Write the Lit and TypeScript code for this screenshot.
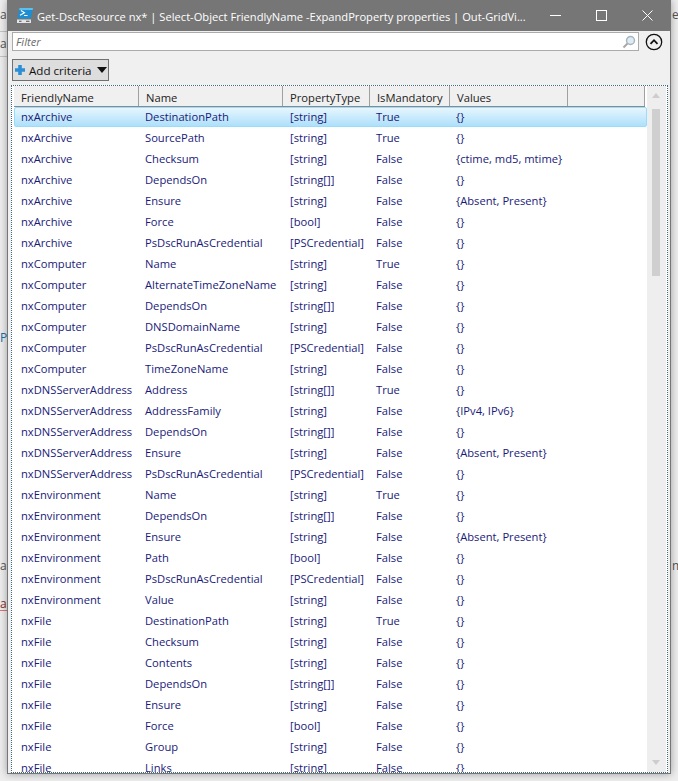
import {LitElement, html, css, svg} from 'lit';
import {customElement} from 'lit/decorators.js';

type Row = [string, string, string, string, string];

const S = '[string]';
const SA = '[string[]]';
const B = '[bool]';
const C = '[PSCredential]';
const E = '{}';
const AP = '{Absent, Present}';

const rows: Row[] = [
  ['nxArchive', 'DestinationPath', S, 'True', E],
  ['nxArchive', 'SourcePath', S, 'True', E],
  ['nxArchive', 'Checksum', S, 'False', '{ctime, md5, mtime}'],
  ['nxArchive', 'DependsOn', SA, 'False', E],
  ['nxArchive', 'Ensure', S, 'False', AP],
  ['nxArchive', 'Force', B, 'False', E],
  ['nxArchive', 'PsDscRunAsCredential', C, 'False', E],
  ['nxComputer', 'Name', S, 'True', E],
  ['nxComputer', 'AlternateTimeZoneName', S, 'False', E],
  ['nxComputer', 'DependsOn', SA, 'False', E],
  ['nxComputer', 'DNSDomainName', S, 'False', E],
  ['nxComputer', 'PsDscRunAsCredential', C, 'False', E],
  ['nxComputer', 'TimeZoneName', S, 'False', E],
  ['nxDNSServerAddress', 'Address', SA, 'True', E],
  ['nxDNSServerAddress', 'AddressFamily', S, 'False', '{IPv4, IPv6}'],
  ['nxDNSServerAddress', 'DependsOn', SA, 'False', E],
  ['nxDNSServerAddress', 'Ensure', S, 'False', AP],
  ['nxDNSServerAddress', 'PsDscRunAsCredential', C, 'False', E],
  ['nxEnvironment', 'Name', S, 'True', E],
  ['nxEnvironment', 'DependsOn', SA, 'False', E],
  ['nxEnvironment', 'Ensure', S, 'False', AP],
  ['nxEnvironment', 'Path', B, 'False', E],
  ['nxEnvironment', 'PsDscRunAsCredential', C, 'False', E],
  ['nxEnvironment', 'Value', S, 'False', E],
  ['nxFile', 'DestinationPath', S, 'True', E],
  ['nxFile', 'Checksum', S, 'False', E],
  ['nxFile', 'Contents', S, 'False', E],
  ['nxFile', 'DependsOn', SA, 'False', E],
  ['nxFile', 'Ensure', S, 'False', E],
  ['nxFile', 'Force', B, 'False', E],
  ['nxFile', 'Group', S, 'False', E],
  ['nxFile', 'Links', S, 'False', E],
];

const heads = ['FriendlyName', 'Name', 'PropertyType', 'IsMandatory', 'Values', ''];

@customElement('app-root')
export class AppRoot extends LitElement {
  static override styles = css`
    :host {
      display: block;
      position: relative;
      width: 678px;
      height: 781px;
      overflow: hidden;
      background: #eeeeee;
      font-family: "Open Sans", "Noto Sans", sans-serif;
      font-size: 11.2px;
      color: #1a1a78;
    }

    /* bits of the windows behind */
    .behind { position: absolute; font-size: 12px; color: #555; line-height: 14px; }
    .line { position: absolute; left: 0; width: 7px; height: 1px; background: #c4c4c4; }

    .window {
      position: absolute;
      left: 7px;
      top: 0;
      width: 664px;
      height: 774px;
      box-sizing: border-box;
      display: flex;
      flex-direction: column;
      background: #f0f0f0;
      border: 1px solid #767676;
      border-top: 0;
      box-shadow: 0 0 8px rgba(0,0,0,.35);
    }

    .title {
      height: 31px;
      flex: none;
      display: flex;
      align-items: center;
      background: #767676;
      color: #fff;
      font-size: 11.15px;
      padding-left: 9px;
    }
    .title .cap { margin-left: 4px; flex: 1; white-space: nowrap; margin-top: 1px; }
    .title svg { flex: none; display: block; }
    .ctl { width: 46px; height: 31px; display: flex; align-items: center; justify-content: center; }

    .filter-row {
      height: 21px;
      flex: none;
      display: flex;
      align-items: center;
      padding-left: 4px;
      gap: 6px;
    }
    .filter {
      width: 627px;
      height: 19px;
      box-sizing: border-box;
      background: #fff;
      border: 1px solid #ababab;
      display: flex;
      align-items: center;
      justify-content: space-between;
      padding: 0 2px 0 3px;
      font-style: italic;
      color: #6d6d6d;
    }

    .crit-row { flex: none; padding: 7px 0 0 4px; height: 22px; }
    .crit {
      width: 97px;
      height: 22px;
      box-sizing: border-box;
      border: 1px solid #707070;
      background: #dddddd;
      display: flex;
      align-items: center;
      padding-left: 2px;
      gap: 4px;
      color: #111;
      font-size: 11.6px;
    }

    .grid {
      flex: none;
      margin: 4px 0 0 3px;
      width: 657px;
      height: 688px;
      box-sizing: border-box;
      background: #fff;
      border: 1px dotted #3f6b80;
      display: flex;
      overflow: hidden;
    }
    .table { width: 635px; flex: none; overflow: hidden; }
    .head {
      display: grid;
      grid-template-columns: 125px 144px 87px 80px 118px 77px;
      height: 20px;
      margin-left: 2px;
      width: 631px;
      background: #f0f0f0;
      border-bottom: 1px solid #8a8a8a;
      color: #222;
    }
    .head div {
      border-right: 1px solid #a0a0a0;
      padding-left: 7px;
      line-height: 24px;
      white-space: nowrap;
      overflow: hidden;
    }
    .row {
      display: grid;
      grid-template-columns: 124px 145px 86px 80px 118px;
      height: 21px;
      line-height: 21px;
      margin-left: 2px;
      box-sizing: border-box;
      white-space: nowrap;
    }
    .row div { padding-left: 7px; overflow: hidden; }
    .row.sel {
      grid-template-columns: 123px 145px 86px 80px 118px;
      height: 20px;
      line-height: 18px;
      border: 1px solid #99dcfb;
      border-radius: 2px;
      background: linear-gradient(#e6f6fe, #aee0fb);
    }
    .row.sel div:first-child { padding-left: 6px; }

    .scroll {
      flex: none;
      width: 19px;
      box-sizing: border-box;
      padding-right: 1px;
      background: #eeeeee;
      display: flex;
      flex-direction: column;
      align-items: center;
    }
    .thumb { width: 8px; height: 167px; background: #cfcfcf; margin-top: 11px; }
    .up, .down { width: 0; height: 0; border-left: 4.5px solid transparent; border-right: 4.5px solid transparent; }
    .up { border-bottom: 5px solid #cdcdcd; margin-top: 7px; }
    .down { border-top: 5px solid #cdcdcd; margin-top: auto; margin-bottom: 7px; }
  `;

  private _icon() {
    return svg`<svg width="16" height="15" viewBox="0 0 16 15">
      <path d="M2.500 0H16l-2 10.500H.5z" fill="#1d8fd1"/>
      <path d="M2.500 0H16l-.4 2H2.100z" fill="#5cc0ee"/>
      <path d="M4 2.500l3.500 2.300L3 7.300" fill="none" stroke="#fff" stroke-width="1.100"/>
      <path d="M7 7.500h3.500" stroke="#fff" stroke-width="1"/>
      <rect x="0" y="11.500" width="14" height="3.500" fill="#e4e4e4"/>
      <rect x="2" y="12.700" width="2.500" height="1.200" fill="#666"/>
      <rect x="9" y="12.700" width="3.500" height="1.200" fill="#666"/>
    </svg>`;
  }

  override render() {
    return html`
      <span class="behind" style="left:0;top:8px">a</span>
      <span class="behind" style="left:0;top:37px">ac</span>
      <span class="behind" style="left:0;top:331px;color:#1b6fa8">P:</span>
      <span class="behind" style="left:0;top:559px">a</span>
      <span class="behind" style="left:0;top:597px;color:#8a2a2a">a</span>
      <span class="behind" style="left:672px;top:8px">ee</span>
      <span class="behind" style="left:672px;top:559px">m</span>
      <div class="line" style="top:31px"></div>
      <div class="line" style="top:56px"></div>
      <div class="line" style="top:610px;background:#e87070"></div>

      <div class="window">
        <div class="title">
          ${this._icon()}
          <span class="cap">Get-DscResource nx* | Select-Object FriendlyName -ExpandProperty properties | Out-GridVi...</span>
          <div class="ctl"><svg width="11" height="11"><path d="M0 5.500h11" stroke="#fff"/></svg></div>
          <div class="ctl"><svg width="11" height="11"><rect x=".5" y=".5" width="10" height="10" fill="none" stroke="#fff"/></svg></div>
          <div class="ctl"><svg width="11" height="11"><path d="M.5.5l10 10M10.500.5l-10 10" stroke="#fff"/></svg></div>
        </div>

        <div class="filter-row">
          <div class="filter">
            <span>Filter</span>
            <svg width="14" height="14" viewBox="0 0 14 14">
              <circle cx="8.500" cy="5.500" r="4" fill="#dcebf5" stroke="#a9b4bb" stroke-width="1.400"/>
              <path d="M5.500 8.500L1.500 12.500" stroke="#a8a8a8" stroke-width="2"/>
            </svg>
          </div>
          <svg width="18" height="18" viewBox="0 0 18 18">
            <circle cx="9" cy="9" r="7.700" fill="none" stroke="#111" stroke-width="1.300"/>
            <path d="M5.500 10.800L9 7.200l3.500 3.600" fill="none" stroke="#111" stroke-width="1.800"/>
          </svg>
        </div>

        <div class="crit-row">
          <div class="crit">
            <svg width="10" height="10" viewBox="0 0 10 10"><path d="M3.200 0h3.600v3.200H10v3.600H6.800V10H3.200V6.800H0V3.200h3.200z" fill="#2a8fd6"/></svg>
            <span>Add criteria</span>
            <svg width="10" height="6" viewBox="0 0 10 6" style="margin-left:1px"><path d="M0 0h10L5 6z" fill="#111"/></svg>
          </div>
        </div>

        <div class="grid">
          <div class="table">
            <div class="head">${heads.map((h) => html`<div>${h}</div>`)}</div>
            ${rows.map((r, i) => html`
              <div class="row ${i === 0 ? 'sel' : ''}">${r.map((c) => html`<div>${c}</div>`)}</div>
            `)}
          </div>
          <div class="scroll">
            <div class="up"></div>
            <div class="thumb"></div>
            <div class="down"></div>
          </div>
        </div>
      </div>
    `;
  }
}

declare global {
  interface HTMLElementTagNameMap {
    'app-root': AppRoot;
  }
}
